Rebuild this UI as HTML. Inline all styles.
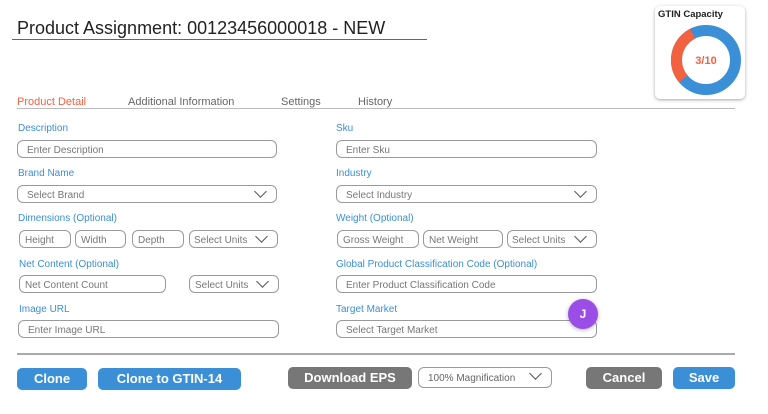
<!DOCTYPE html>
<html><head><meta charset="utf-8"><style>
*{margin:0;padding:0;box-sizing:border-box}
body{width:768px;height:414px;background:#fff;font-family:"Liberation Sans",sans-serif;position:relative;overflow:hidden}
.a{position:absolute}
.lbl{position:absolute;font-size:10px;color:#3a8fd6}
.in{position:absolute;height:18px;border:1px solid #9a9a9a;border-radius:6px;font-size:10px;color:#777;padding-left:9px;line-height:17px;padding-top:1px;white-space:nowrap;overflow:hidden}
.sel:after{content:"";position:absolute;right:11px;top:1px;width:8px;height:8px;border-right:1.7px solid #555;border-bottom:1.7px solid #555;transform:rotate(45deg)}
.btn{position:absolute;height:22px;border-radius:5px;color:#fff;font-weight:bold;font-size:13px;text-align:center;line-height:22px}
.blue{background:#3a8fd6}.gray{background:#777}
.tab{position:absolute;top:96px;font-size:11px;color:#666}
</style></head><body>
<div class="a" style="left:17px;top:18px;font-size:18px;color:#222">Product Assignment: 00123456000018 - NEW</div>
<div class="a" style="left:12px;top:39px;width:415px;height:1px;background:#666"></div>
<div class="a" style="left:655px;top:6px;width:90px;height:93px;border-radius:5px;box-shadow:0 1px 3px rgba(0,0,0,.35);background:#fff">
<div style="font-size:9.5px;font-weight:bold;color:#222;margin:3px 0 0 3px">GTIN Capacity</div>
<svg class="a" style="left:16px;top:19px" width="70" height="70" viewBox="0 0 70 70">
<circle cx="35" cy="35" r="29.5" fill="none" stroke="#3a8fd6" stroke-width="11"/>
<circle cx="35" cy="35" r="29.5" fill="none" stroke="#f26140" stroke-width="11" stroke-dasharray="53 200" transform="rotate(140 35 35)"/>
<text x="35" y="39" text-anchor="middle" font-size="11" font-weight="bold" fill="#f26140" font-family="Liberation Sans">3/10</text>
</svg></div>
<div class="tab" style="left:17px;color:#f26140">Product Detail</div>
<div class="tab" style="left:128px">Additional Information</div>
<div class="tab" style="left:281px">Settings</div>
<div class="tab" style="left:358px">History</div>
<div class="a" style="left:17px;top:108px;width:718px;height:1px;background:#bbb"></div>

<div class="lbl" style="left:18px;top:123px">Description</div>
<div class="in" style="left:17px;top:140px;width:260px">Enter Description</div>
<div class="lbl" style="left:336px;top:123px">Sku</div>
<div class="in" style="left:336px;top:140px;width:261px">Enter Sku</div>

<div class="lbl" style="left:18px;top:168px">Brand Name</div>
<div class="in sel" style="left:17px;top:185px;width:260px">Select Brand</div>
<div class="lbl" style="left:336px;top:168px">Industry</div>
<div class="in sel" style="left:336px;top:185px;width:261px">Select Industry</div>

<div class="lbl" style="left:18px;top:213px">Dimensions (Optional)</div>
<div class="in" style="left:19px;top:230px;width:52px;padding-left:5px">Height</div>
<div class="in" style="left:75px;top:230px;width:51px;padding-left:5px">Width</div>
<div class="in" style="left:132px;top:230px;width:52px;padding-left:5px">Depth</div>
<div class="in sel" style="left:189px;top:230px;width:89px;padding-left:4px">Select Units</div>
<div class="lbl" style="left:336px;top:213px">Weight (Optional)</div>
<div class="in" style="left:337px;top:230px;width:82px;padding-left:5px">Gross Weight</div>
<div class="in" style="left:423px;top:230px;width:80px;padding-left:5px">Net Weight</div>
<div class="in sel" style="left:507px;top:230px;width:90px;padding-left:4px">Select Units</div>

<div class="lbl" style="left:19px;top:259px">Net Content (Optional)</div>
<div class="in" style="left:19px;top:275px;width:147px;padding-left:5px">Net Content Count</div>
<div class="in sel" style="left:189px;top:275px;width:90px;padding-left:5px">Select Units</div>
<div class="lbl" style="left:336px;top:259px">Global Product Classification Code (Optional)</div>
<div class="in" style="left:336px;top:275px;width:261px">Enter Product Classification Code</div>

<div class="lbl" style="left:19px;top:304px">Image URL</div>
<div class="in" style="left:18px;top:320px;width:261px">Enter Image URL</div>
<div class="lbl" style="left:336px;top:304px">Target Market</div>
<div class="in" style="left:336px;top:320px;width:261px">Select Target Market</div>
<div class="a" style="left:568px;top:299px;width:30px;height:30px;border-radius:50%;background:#9b4de8;color:#fff;font-weight:bold;font-size:12px;text-align:center;line-height:30px;box-shadow:0 1px 4px rgba(0,0,0,.3)">J</div>

<div class="a" style="left:17px;top:353px;width:718px;height:2px;background:#aaa"></div>
<div class="btn blue" style="left:17px;top:368px;width:70px">Clone</div>
<div class="btn blue" style="left:98px;top:368px;width:143px">Clone to GTIN-14</div>
<div class="btn gray" style="left:288px;top:367px;width:124px">Download EPS</div>
<div class="in sel" style="left:418px;top:367px;width:134px;height:21px;line-height:19px;color:#666">100% Magnification</div>
<div class="btn gray" style="left:586px;top:367px;width:76px">Cancel</div>
<div class="btn blue" style="left:673px;top:367px;width:62px">Save</div>
</body></html>
